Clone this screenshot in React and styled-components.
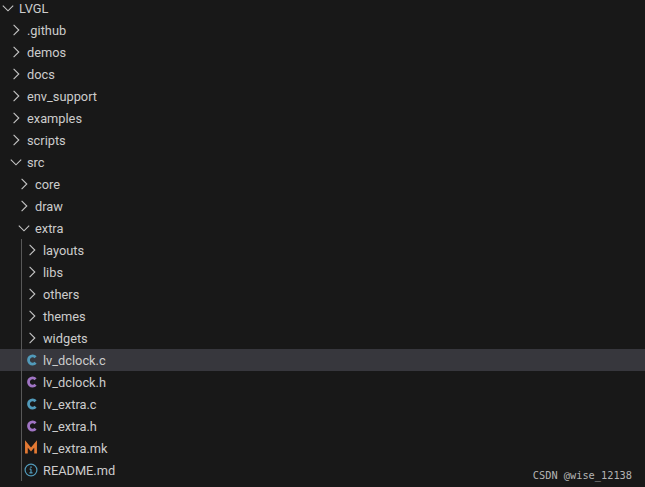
import React from 'react'
import styled, { createGlobalStyle } from 'styled-components'

const Global = createGlobalStyle`
  html, body {
    margin: 0;
    height: 100%;
    background: #181818;
  }
`

const Page = styled.div`
  position: relative;
  width: 645px;
  height: 487px;
  overflow: hidden;
  background: #181818;
  font-family: Roboto, "Open Sans", sans-serif;
`

const Tree = styled.ul`
  list-style: none;
  margin: -3px 0 0;
  padding: 0;
`

const Row = styled.li`
  position: relative;
  display: flex;
  align-items: center;
  height: 22px;
  padding-left: ${p => p.$depth * 8}px;
  background: ${p => (p.$selected ? '#37373d' : 'transparent')};
  color: #cccccc;
  font-size: 12.8px;

  ${p =>
    p.$guide &&
    `::before {
      content: '';
      position: absolute;
      left: 21px;
      top: 0;
      bottom: 0;
      width: 1px;
      background: #585858;
    }`}
`

const IconSlot = styled.span`
  display: flex;
  align-items: center;
  justify-content: center;
  flex: none;
  width: 16px;
  height: 16px;
  margin-right: 3px;
`

const Chevron = ({ open }) => (
  <svg width='16' height='16' viewBox='0 0 16 16' fill='none' stroke='#c5c5c5' strokeWidth='1.1'>
    {open ? <path d='M2.8 5.6 8 10.8l5.2-5.2' /> : <path d='M5.6 2.8 10.8 8l-5.2 5.2' />}
  </svg>
)

const CIcon = ({ color }) => (
  <svg width='16' height='16' viewBox='0 0 16 16' fill='none' stroke={color} strokeWidth='2.8'>
    <path d='M11.6 5.2A4.1 4.1 0 1 0 11.6 10.8' />
  </svg>
)

const MIcon = () => (
  <svg width='16' height='16' viewBox='0 0 16 16' fill='none' stroke='#e37933' strokeWidth='2.7'>
    <path d='M2.4 13.5V4L7 9.5 11.6 4v9.5' />
  </svg>
)

const InfoIcon = () => (
  <svg width='16' height='16' viewBox='0 0 16 16' fill='none' stroke='#519aba' strokeWidth='1.2'>
    <circle cx='7' cy='8' r='5.9' />
    <path d='M7 7.2v3.6M5.6 7.2H7M5.4 10.9h3.2' />
    <path d='M7 4.4v1.4' strokeWidth='1.6' />
  </svg>
)

const Watermark = styled.div`
  position: absolute;
  right: 13px;
  bottom: 5px;
  color: #b4b4b4;
  font-family: "DejaVu Sans Mono", "Liberation Mono", monospace;
  font-size: 10.3px;
  line-height: 14px;
`

const folder = (name, depth, open, guide) => ({ name, depth, open, guide, kind: 'folder' })
const file = (name, icon, selected) => ({ name, icon, selected, depth: 3, guide: true, kind: 'file' })

const rows = [
  folder('LVGL', 0, true),
  folder('.github', 1),
  folder('demos', 1),
  folder('docs', 1),
  folder('env_support', 1),
  folder('examples', 1),
  folder('scripts', 1),
  folder('src', 1, true),
  folder('core', 2),
  folder('draw', 2),
  folder('extra', 2, true),
  folder('layouts', 3, false, true),
  folder('libs', 3, false, true),
  folder('others', 3, false, true),
  folder('themes', 3, false, true),
  folder('widgets', 3, false, true),
  file('lv_dclock.c', <CIcon color='#519aba' />, true),
  file('lv_dclock.h', <CIcon color='#a074c4' />),
  file('lv_extra.c', <CIcon color='#519aba' />),
  file('lv_extra.h', <CIcon color='#a074c4' />),
  file('lv_extra.mk', <MIcon />),
  file('README.md', <InfoIcon />)
]

const App = () => (
  <Page>
    <Global />
    <Tree>
      {rows.map(r => (
        <Row key={r.name} $depth={r.depth} $guide={r.guide} $selected={r.selected}>
          <IconSlot>{r.kind === 'folder' ? <Chevron open={r.open} /> : r.icon}</IconSlot>
          {r.name}
        </Row>
      ))}
    </Tree>
    <Watermark>CSDN @wise_12138</Watermark>
  </Page>
)

export default App
